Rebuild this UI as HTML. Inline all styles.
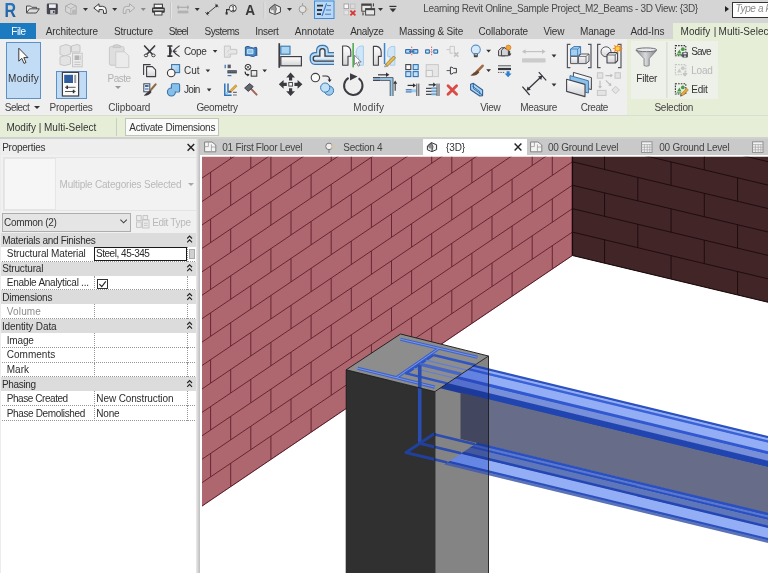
<!DOCTYPE html>
<html><head><meta charset="utf-8"><title>Revit</title>
<style>
*{box-sizing:border-box;margin:0;padding:0}
html,body{width:768px;height:573px;overflow:hidden;background:#fff}
body{position:relative;font-family:"Liberation Sans",sans-serif;font-size:10px;color:#1e1e1e}
.abs,.t{position:absolute;white-space:nowrap}
.t{line-height:14px;height:14px}
#title{position:absolute;left:0;top:0;width:768px;height:39px;background:#d5d5d5}
#ribbon{position:absolute;left:0;top:39px;width:768px;height:77px;background:#efefef}
#opt{position:absolute;left:0;top:115.4px;width:768px;height:21.8px;background:#e6eed8;border-top:1px solid #d9dfd0}
#strip{position:absolute;left:0;top:137px;width:768px;height:20px;background:#c9c9c9}
#props{position:absolute;left:0;top:139px;width:198px;height:434px;background:#fff}
.vp{position:absolute;left:0;top:0;will-change:transform}
#txt{position:absolute;left:0;top:0;width:768px;height:573px;will-change:transform;transform:translateZ(0)}
.sep{position:absolute;top:42px;width:1px;height:70px;background:#dcdcdc}
.pl{color:#3c3c3c}
.gr{color:#9a9a9a}
.row{position:absolute;left:0;width:196px;height:14px}
.hd{background:#dcdcdc}
</style></head><body>

<div id="title"></div>
<!-- tab row -->
<div class="abs" style="left:0;top:23px;width:36px;height:16px;background:#1c7ac0"></div>
<div class="abs" style="left:673px;top:23px;width:95px;height:17px;background:#e6eed8"></div>
<div class="abs" style="left:732px;top:2px;width:40px;height:16px;background:#fff;border:1px solid #333"></div>
<div class="abs" style="left:725px;top:6px;width:0;height:0;border-left:4px solid #222;border-top:3.5px solid transparent;border-bottom:3.5px solid transparent"></div>

<div id="ribbon"></div>
<div class="abs" style="left:626.8px;top:39px;width:141.2px;height:77px;background:#e6eed8"></div>
<div class="abs" style="left:631px;top:41px;width:87px;height:58px;background:#eef0ea"></div>
<!-- Modify btn -->
<div class="abs" style="left:5.6px;top:41.8px;width:35.6px;height:57.6px;background:#c3dcf5;border:1px solid #5a92c8"></div>
<div class="abs" style="left:34px;top:106px;border-top:3.5px solid #333;border-left:3.5px solid transparent;border-right:3.5px solid transparent"></div>
<div class="abs" style="left:56px;top:71.2px;width:31px;height:27.6px;background:#c3dcf5;border:1px solid #5a92c8"></div>
<div class="abs" style="left:115px;top:86px;border-top:3px solid #999;border-left:3px solid transparent;border-right:3px solid transparent"></div>

<div id="opt"></div>
<div class="abs" style="left:116px;top:118px;width:1px;height:18px;background:#c8cfbc"></div>
<div class="abs" style="left:125px;top:118.2px;width:94px;height:18px;background:#fafafa;border:1px solid #c2c6ba"></div>

<div id="strip"></div>
<div class="abs" style="left:0;top:137px;width:768px;height:2.4px;background:#d0d0d0"></div>
<div class="abs" style="left:200.2px;top:155.2px;width:568px;height:2px;background:#fff"></div>
<div class="abs" style="left:423px;top:139px;width:104px;height:17px;background:#fff"></div>

<div id="props"></div>
<div class="abs" style="left:0;top:139.3px;width:198px;height:15.7px;background:#eeeeee"></div>
<div class="abs" style="left:0;top:155px;width:198px;height:57.5px;background:#f1f1f1"></div>
<div class="abs" style="left:2.5px;top:156.5px;width:194px;height:54.5px;border:1px solid #e3e3e3;background:#f2f2f2"></div>
<div class="abs" style="left:3.5px;top:157.5px;width:52px;height:52.5px;background:#f6f6f6;border:1px solid #e6e6e6"></div>
<div class="abs" style="left:187.5px;top:182.5px;border-top:3.5px solid #a8a8a8;border-left:3.5px solid transparent;border-right:3.5px solid transparent"></div>
<div class="abs" style="left:0;top:212.5px;width:198px;height:20.7px;background:#f0f0f0"></div>
<div class="abs" style="left:1.5px;top:213.3px;width:129px;height:18.4px;background:#e5e5e5;border:1px solid #adadad"></div>
<div class="abs" style="left:0;top:232.90px;width:197px;height:14.00px;background:#dcdcdc"></div>
<div class="abs" style="left:0;top:246.90px;width:197px;height:14.75px;background:#fff;border-bottom:1px dotted #969696"></div>
<div class="abs" style="left:93.5px;top:246.90px;width:94px;height:14.75px;border-left:1px dotted #969696;border-right:1px dotted #969696"></div>
<div class="abs" style="left:196px;top:246.90px;width:1px;height:14.75px;border-left:1px dotted #969696"></div>
<div class="abs" style="left:0;top:261.65px;width:197px;height:14.00px;background:#dcdcdc"></div>
<div class="abs" style="left:0;top:275.65px;width:197px;height:14.75px;background:#fff;border-bottom:1px dotted #969696"></div>
<div class="abs" style="left:93.5px;top:275.65px;width:94px;height:14.75px;border-left:1px dotted #969696;border-right:1px dotted #969696"></div>
<div class="abs" style="left:196px;top:275.65px;width:1px;height:14.75px;border-left:1px dotted #969696"></div>
<div class="abs" style="left:0;top:290.40px;width:197px;height:14.00px;background:#dcdcdc"></div>
<div class="abs" style="left:0;top:304.40px;width:197px;height:14.75px;background:#fff;border-bottom:1px dotted #969696"></div>
<div class="abs" style="left:93.5px;top:304.40px;width:94px;height:14.75px;border-left:1px dotted #969696;border-right:1px dotted #969696"></div>
<div class="abs" style="left:196px;top:304.40px;width:1px;height:14.75px;border-left:1px dotted #969696"></div>
<div class="abs" style="left:0;top:319.15px;width:197px;height:14.00px;background:#dcdcdc"></div>
<div class="abs" style="left:0;top:333.15px;width:197px;height:14.75px;background:#fff;border-bottom:1px dotted #969696"></div>
<div class="abs" style="left:93.5px;top:333.15px;width:94px;height:14.75px;border-left:1px dotted #969696;border-right:1px dotted #969696"></div>
<div class="abs" style="left:196px;top:333.15px;width:1px;height:14.75px;border-left:1px dotted #969696"></div>
<div class="abs" style="left:0;top:347.90px;width:197px;height:14.75px;background:#fff;border-bottom:1px dotted #969696"></div>
<div class="abs" style="left:93.5px;top:347.90px;width:94px;height:14.75px;border-left:1px dotted #969696;border-right:1px dotted #969696"></div>
<div class="abs" style="left:196px;top:347.90px;width:1px;height:14.75px;border-left:1px dotted #969696"></div>
<div class="abs" style="left:0;top:362.65px;width:197px;height:14.75px;background:#fff;border-bottom:1px dotted #969696"></div>
<div class="abs" style="left:93.5px;top:362.65px;width:94px;height:14.75px;border-left:1px dotted #969696;border-right:1px dotted #969696"></div>
<div class="abs" style="left:196px;top:362.65px;width:1px;height:14.75px;border-left:1px dotted #969696"></div>
<div class="abs" style="left:0;top:377.40px;width:197px;height:14.00px;background:#dcdcdc"></div>
<div class="abs" style="left:0;top:391.40px;width:197px;height:14.75px;background:#fff;border-bottom:1px dotted #969696"></div>
<div class="abs" style="left:93.5px;top:391.40px;width:94px;height:14.75px;border-left:1px dotted #969696;border-right:1px dotted #969696"></div>
<div class="abs" style="left:196px;top:391.40px;width:1px;height:14.75px;border-left:1px dotted #969696"></div>
<div class="abs" style="left:0;top:406.15px;width:197px;height:14.75px;background:#fff;border-bottom:1px dotted #969696"></div>
<div class="abs" style="left:93.5px;top:406.15px;width:94px;height:14.75px;border-left:1px dotted #969696;border-right:1px dotted #969696"></div>
<div class="abs" style="left:196px;top:406.15px;width:1px;height:14.75px;border-left:1px dotted #969696"></div>
<div class="abs" style="left:94.3px;top:247.40px;width:92.6px;height:13.4px;border:1.3px solid #1a1a1a;background:#fff"></div>
<div class="abs" style="left:188.6px;top:249.10px;width:6.6px;height:10.4px;background:#d0d0d0;border:1px solid #aaa"></div>
<div class="abs" style="left:97px;top:278.85px;width:10.6px;height:10.4px;background:#fff;border:1.1px solid #333"></div>
<div class="abs" style="left:196.4px;top:139px;width:3.8px;height:434px;background:linear-gradient(90deg,#ececec,#cfcfcf 60%,#bdbdbd)"></div>
<div class="abs" style="left:0;top:139px;width:1px;height:434px;background:#ececec"></div>
<svg class="vp" width="768" height="573" viewBox="0 0 768 573">
<defs><clipPath id="cl"><polygon points="202,156.7 572.4,156.7 572.4,255.5 202,506.11"/></clipPath>
<clipPath id="cr"><polygon points="572.4,156.7 768,156.7 768,302.25 572.4,255.5"/></clipPath></defs>
<polygon points="202,156.7 572.4,156.7 572.4,255.5 202,506.11" fill="#ae676f"/>
<polygon points="572.4,156.7 768,156.7 768,302.25 572.4,255.5" fill="#422527"/>
<path clip-path="url(#cl)" d="M202,506.11 L572.4,255.5 M202,482.68 L572.4,232.07 M202,459.25 L572.4,208.64 M202,435.82 L572.4,185.21 M202,412.39 L572.4,161.78 M202,388.96 L572.4,138.35 M202,365.53 L572.4,114.92 M202,342.1 L572.4,91.49 M202,318.67 L572.4,68.06 M202,295.24 L572.4,44.63 M202,271.81 L572.4,21.2 M202,248.38 L572.4,-2.23 M202,224.95 L572.4,-25.66 M202,201.52 L572.4,-49.09 M202,178.09 L572.4,-72.52 M202,154.66 L572.4,-95.95 M552.3,269.1 L552.3,245.67 M552.3,222.24 L552.3,198.81 M552.3,175.38 L552.3,151.95 M552.3,128.52 L552.3,105.09 M552.3,81.66 L552.3,58.23 M552.3,34.8 L552.3,11.37 M552.3,-12.06 L552.3,-35.49 M552.3,-58.92 L552.3,-82.35 M532.2,259.27 L532.2,235.84 M532.2,212.41 L532.2,188.98 M532.2,165.55 L532.2,142.12 M532.2,118.69 L532.2,95.26 M532.2,71.83 L532.2,48.4 M532.2,24.97 L532.2,1.54 M532.2,-21.89 L532.2,-45.32 M532.2,-68.75 L532.2,-92.18 M512.1,296.3 L512.1,272.87 M512.1,249.44 L512.1,226.01 M512.1,202.58 L512.1,179.15 M512.1,155.72 L512.1,132.29 M512.1,108.86 L512.1,85.43 M512.1,62 L512.1,38.57 M512.1,15.14 L512.1,-8.29 M512.1,-31.72 L512.1,-55.15 M492,286.47 L492,263.04 M492,239.61 L492,216.18 M492,192.75 L492,169.32 M492,145.89 L492,122.46 M492,99.03 L492,75.6 M492,52.17 L492,28.74 M492,5.31 L492,-18.12 M492,-41.55 L492,-64.98 M471.9,323.5 L471.9,300.07 M471.9,276.64 L471.9,253.21 M471.9,229.78 L471.9,206.35 M471.9,182.92 L471.9,159.49 M471.9,136.06 L471.9,112.63 M471.9,89.2 L471.9,65.77 M471.9,42.34 L471.9,18.91 M471.9,-4.52 L471.9,-27.95 M451.8,313.67 L451.8,290.24 M451.8,266.81 L451.8,243.38 M451.8,219.95 L451.8,196.52 M451.8,173.09 L451.8,149.66 M451.8,126.23 L451.8,102.8 M451.8,79.37 L451.8,55.94 M451.8,32.51 L451.8,9.08 M451.8,-14.35 L451.8,-37.78 M431.7,350.7 L431.7,327.27 M431.7,303.84 L431.7,280.41 M431.7,256.98 L431.7,233.55 M431.7,210.12 L431.7,186.69 M431.7,163.26 L431.7,139.83 M431.7,116.4 L431.7,92.97 M431.7,69.54 L431.7,46.11 M431.7,22.68 L431.7,-0.75 M411.6,340.87 L411.6,317.44 M411.6,294.01 L411.6,270.58 M411.6,247.15 L411.6,223.72 M411.6,200.29 L411.6,176.86 M411.6,153.43 L411.6,130 M411.6,106.57 L411.6,83.14 M411.6,59.71 L411.6,36.28 M411.6,12.85 L411.6,-10.58 M391.5,377.9 L391.5,354.47 M391.5,331.04 L391.5,307.61 M391.5,284.18 L391.5,260.75 M391.5,237.32 L391.5,213.89 M391.5,190.46 L391.5,167.03 M391.5,143.6 L391.5,120.17 M391.5,96.74 L391.5,73.31 M391.5,49.88 L391.5,26.45 M371.4,368.07 L371.4,344.64 M371.4,321.21 L371.4,297.78 M371.4,274.35 L371.4,250.92 M371.4,227.49 L371.4,204.06 M371.4,180.63 L371.4,157.2 M371.4,133.77 L371.4,110.34 M371.4,86.91 L371.4,63.48 M371.4,40.05 L371.4,16.62 M351.3,405.1 L351.3,381.67 M351.3,358.24 L351.3,334.81 M351.3,311.38 L351.3,287.95 M351.3,264.52 L351.3,241.09 M351.3,217.66 L351.3,194.23 M351.3,170.8 L351.3,147.37 M351.3,123.94 L351.3,100.51 M351.3,77.08 L351.3,53.65 M331.2,395.27 L331.2,371.84 M331.2,348.41 L331.2,324.98 M331.2,301.55 L331.2,278.12 M331.2,254.69 L331.2,231.26 M331.2,207.83 L331.2,184.4 M331.2,160.97 L331.2,137.54 M331.2,114.11 L331.2,90.68 M331.2,67.25 L331.2,43.82 M311.1,432.3 L311.1,408.87 M311.1,385.44 L311.1,362.01 M311.1,338.58 L311.1,315.15 M311.1,291.72 L311.1,268.29 M311.1,244.86 L311.1,221.43 M311.1,198 L311.1,174.57 M311.1,151.14 L311.1,127.71 M311.1,104.28 L311.1,80.85 M291,422.47 L291,399.04 M291,375.61 L291,352.18 M291,328.75 L291,305.32 M291,281.89 L291,258.46 M291,235.03 L291,211.6 M291,188.17 L291,164.74 M291,141.31 L291,117.88 M291,94.45 L291,71.02 M270.9,459.49 L270.9,436.06 M270.9,412.63 L270.9,389.2 M270.9,365.77 L270.9,342.34 M270.9,318.91 L270.9,295.48 M270.9,272.05 L270.9,248.62 M270.9,225.19 L270.9,201.76 M270.9,178.33 L270.9,154.9 M270.9,131.47 L270.9,108.04 M250.8,449.66 L250.8,426.23 M250.8,402.8 L250.8,379.37 M250.8,355.94 L250.8,332.51 M250.8,309.08 L250.8,285.65 M250.8,262.22 L250.8,238.79 M250.8,215.36 L250.8,191.93 M250.8,168.5 L250.8,145.07 M250.8,121.64 L250.8,98.21 M230.7,486.69 L230.7,463.26 M230.7,439.83 L230.7,416.4 M230.7,392.97 L230.7,369.54 M230.7,346.11 L230.7,322.68 M230.7,299.25 L230.7,275.82 M230.7,252.39 L230.7,228.96 M230.7,205.53 L230.7,182.1 M230.7,158.67 L230.7,135.24 M210.6,476.86 L210.6,453.43 M210.6,430 L210.6,406.57 M210.6,383.14 L210.6,359.71 M210.6,336.28 L210.6,312.85 M210.6,289.42 L210.6,265.99 M210.6,242.56 L210.6,219.13 M210.6,195.7 L210.6,172.27 M210.6,148.84 L210.6,125.41 M190.5,513.89 L190.5,490.46 M190.5,467.03 L190.5,443.6 M190.5,420.17 L190.5,396.74 M190.5,373.31 L190.5,349.88 M190.5,326.45 L190.5,303.02 M190.5,279.59 L190.5,256.16 M190.5,232.73 L190.5,209.3 M190.5,185.87 L190.5,162.44" stroke="#5e1f2b" stroke-width="0.9" fill="none"/>
<path clip-path="url(#cr)" d="M572.4,255.5 L768,302.25 M572.4,232.07 L768,278.82 M572.4,208.64 L768,255.39 M572.4,185.21 L768,231.96 M572.4,161.78 L768,208.53 M572.4,138.35 L768,185.1 M572.4,114.92 L768,161.67 M572.4,91.49 L768,138.24 M604.55,263.18 L604.55,239.75 M604.55,216.32 L604.55,192.89 M604.55,169.46 L604.55,146.03 M604.55,122.6 L604.55,99.17 M637.8,247.7 L637.8,224.27 M637.8,200.84 L637.8,177.41 M637.8,153.98 L637.8,130.55 M637.8,107.12 L637.8,83.69 M671.05,279.08 L671.05,255.65 M671.05,232.22 L671.05,208.79 M671.05,185.36 L671.05,161.93 M671.05,138.5 L671.05,115.07 M704.3,263.59 L704.3,240.16 M704.3,216.73 L704.3,193.3 M704.3,169.87 L704.3,146.44 M704.3,123.01 L704.3,99.58 M737.55,294.97 L737.55,271.54 M737.55,248.11 L737.55,224.68 M737.55,201.25 L737.55,177.82 M737.55,154.39 L737.55,130.96 M770.8,279.49 L770.8,256.06 M770.8,232.63 L770.8,209.2 M770.8,185.77 L770.8,162.34 M770.8,138.91 L770.8,115.48" stroke="#1c0a0d" stroke-width="0.9" fill="none"/>
<line x1="572.4" y1="156.7" x2="572.4" y2="255.5" stroke="#1e070a" stroke-width="1.4"/>
<line x1="202" y1="506.11" x2="572.4" y2="255.5" stroke="#5e1f2b" stroke-width="1"/>
<line x1="572.4" y1="255.5" x2="768" y2="302.25" stroke="#1c0a0d" stroke-width="1"/>
<polygon points="346.2,369.8 434.9,391.6 434.9,573 346.2,573" fill="#303030"/>
<polygon points="434.9,391.6 488.5,356 488.5,573 434.9,573" fill="#848484"/>
<polygon points="346.2,369.8 400.5,334 488.5,356 434.9,391.6" fill="#8d8d8d"/>
<polygon points="488.5,368.33 768,435.97 768,438.77 488.5,371.13" fill="#2c52c0"/>
<polygon points="488.5,370.53 768,438.17 768,440.87 488.5,373.23" fill="#94aef5"/>
<polygon points="488.5,372.63 768,440.27 768,443.37 488.5,375.73" fill="#3a62d8"/>
<polygon points="488.5,375.13 768,442.77 768,451.77 488.5,384.13" fill="#94aef5"/>
<polygon points="488.5,383.53 768,451.17 768,454.87 488.5,387.23" fill="#3058d0"/>
<polygon points="488.5,386.63 768,454.27 768,461.27 488.5,393.63" fill="#7890da"/>
<polygon points="488.5,393.03 768,460.67 768,467.57 488.5,399.93" fill="#2145b0"/>
<polygon points="488.5,399.33 768,466.97 768,513.47 488.5,445.83" fill="#676d89"/>
<polygon points="488.5,445.23 768,512.87 768,516.07 488.5,448.43" fill="#2a50c0"/>
<polygon points="488.5,447.83 768,515.47 768,518.17 488.5,450.53" fill="#5a78d0"/>
<polygon points="488.5,449.93 768,517.57 768,520.27 488.5,452.63" fill="#2a50c0"/>
<polygon points="488.5,452.03 768,519.67 768,526.07 488.5,458.43" fill="#5f76b8"/>
<polygon points="488.5,457.83 768,525.47 768,528.67 488.5,461.03" fill="#2446b4"/>
<polygon points="488.5,460.43 768,528.07 768,538.57 488.5,470.93" fill="#94aef5"/>
<polygon points="488.5,470.33 768,537.97 768,540.67 488.5,473.03" fill="#2a50c0"/>
<polygon points="488.5,472.43 768,540.07 768,542.97 488.5,475.33" fill="#5a72b8"/>
<defs><clipPath id="cf1"><polygon points="434.9,391.6 488.5,356 488.5,573 434.9,573"/></clipPath>
<clipPath id="cf2"><polygon points="440,467.41 488.5,435.2 488.5,573 440,573"/></clipPath></defs>
<polygon clip-path="url(#cf1)" points="430,354.18 488.5,368.33 488.5,371.13 430,356.98" fill="#2446b4"/>
<polygon clip-path="url(#cf1)" points="430,356.38 488.5,370.53 488.5,373.23 430,359.08" fill="#6482e0"/>
<polygon clip-path="url(#cf1)" points="430,358.48 488.5,372.63 488.5,375.73 430,361.58" fill="#3054c8"/>
<polygon clip-path="url(#cf1)" points="430,360.98 488.5,375.13 488.5,384.13 430,369.98" fill="#6482e0"/>
<polygon clip-path="url(#cf1)" points="430,369.38 488.5,383.53 488.5,387.23 430,373.08" fill="#2a4cc0"/>
<polygon clip-path="url(#cf1)" points="430,372.48 488.5,386.63 488.5,393.63 430,379.48" fill="#5470cc"/>
<polygon clip-path="url(#cf1)" points="430,378.88 488.5,393.03 488.5,399.93 430,385.78" fill="#1c3a9c"/>
<polygon points="460.5,392.56 488.5,399.33 488.5,445.83 460.5,439.06" fill="#42465e"/>
<polygon clip-path="url(#cf2)" points="440,433.5 488.5,445.23 488.5,448.43 440,436.7" fill="#1d3c9c"/>
<polygon clip-path="url(#cf2)" points="440,436.1 488.5,447.83 488.5,450.53 440,438.8" fill="#3f58b0"/>
<polygon clip-path="url(#cf2)" points="440,438.2 488.5,449.93 488.5,452.63 440,440.9" fill="#2444a8"/>
<polygon clip-path="url(#cf2)" points="440,440.3 488.5,452.03 488.5,458.43 440,446.7" fill="#44589e"/>
<polygon clip-path="url(#cf2)" points="440,446.1 488.5,457.83 488.5,461.03 440,449.3" fill="#1f3ea6"/>
<polygon clip-path="url(#cf2)" points="440,448.7 488.5,460.43 488.5,470.93 440,459.2" fill="#6686e4"/>
<polygon clip-path="url(#cf2)" points="440,458.6 488.5,470.33 488.5,473.03 440,461.3" fill="#2446b4"/>
<polygon clip-path="url(#cf2)" points="440,460.7 488.5,472.43 488.5,475.33 440,463.6" fill="#4a60a8"/>
<path d="M400.4,339.2 L477.5,357.3 M357.7,368.3 L434.8,387.1 M438.95,348.25 L396.25,377.7" stroke="#3d63cc" stroke-width="3.2" fill="none"/>
<path d="M400.4,339.2 L477.5,357.3 M357.7,368.3 L434.8,387.1 M438.95,348.25 L396.25,377.7" stroke="#7f9be6" stroke-width="0.9" fill="none"/>
<path d="M447.29,383.37 L406.1,373.4 L433.4,355 M433.4,355 L474.89,365.04" stroke="#2f54c4" stroke-width="2.5" fill="none" stroke-linejoin="round"/>
<path d="M419.75,364.2 L461.09,374.2" stroke="#4866c6" stroke-width="3.4" fill="none"/>
<path d="M413.74,368.25 L455.02,378.24 M425.76,360.15 L467.16,370.17" stroke="#5f7fd6" stroke-width="1.2" fill="none"/>
<rect x="417.95" y="365.2" width="3.6" height="78.2" fill="#2a4db2"/>
<path d="M434.9,459.57 L406.1,452.6 L433.4,434.2 L435.9,434.81 M419.75,443.4 L434.9,446.96" stroke="#21409e" stroke-width="3" fill="none" stroke-linejoin="round"/>
<path d="M434.9,459.57 L447.29,462.57 M434.9,434.56 L474.89,444.24 M434.9,446.96 L461,453.28" stroke="#2c4cb0" stroke-width="2.6" fill="none"/>
<path d="M346.2,369.8 L400.5,334 L488.5,356 L434.9,391.6 Z M434.9,391.6 L434.9,573 M488.5,356 L488.5,573 M346.2,369.8 L346.2,573" stroke="#1a1a1a" stroke-width="0.9" fill="none"/>
</svg>
<svg class="vp" width="768" height="573" viewBox="0 0 768 573">
<g id="pp">
<!-- close X -->
<path d="M187.6,144 L194.2,150.8 M194.2,144 L187.6,150.8" stroke="#222" stroke-width="1.4"/>
<!-- combo chevron -->
<path d="M120.4,219.6 L123.6,222.8 L126.8,219.6" fill="none" stroke="#444" stroke-width="1.1"/>
<!-- edit type icon (grey) -->
<g stroke="#c2c2c2" stroke-width="0.9" fill="#ececec"><rect x="136.6" y="215.6" width="4.6" height="5"/><rect x="143" y="215.6" width="4.6" height="4"/><rect x="136.6" y="222" width="4.6" height="5.4"/><rect x="142.6" y="220" width="6.4" height="8"/></g>
<path d="M144,223.2 H147.6 M144,225.4 H147.6" stroke="#c2c2c2" stroke-width="0.9"/>
<!-- view tab icons -->
<path d="M204.6,142 H212 L215.8,145 V151.8 H204.6 Z" fill="#f4f4f4" stroke="#777" stroke-width="0.9"/>
<path d="M208.4,142 V146.6 H204.6 M211.4,147 H215.6 M211.4,144.4 V151.6" fill="none" stroke="#999" stroke-width="0.8"/>
<circle cx="329" cy="146.4" r="3.3" fill="#eee" stroke="#777" stroke-width="1"/><path d="M331.4,143.6 L335.4,146.4 L331.4,149.2 Z" fill="#d2c6a8"/><path d="M329,149.8 V153" stroke="#777" stroke-width="1"/>
<!-- 3d tab -->
<path d="M427.4,146 L431.4,142.6 L436.6,144.8 V149.6 L432,151.6 L427.4,149.8 Z" fill="#f4f4f4" stroke="#333" stroke-width="1" stroke-linejoin="round"/>
<path d="M427.6,146 L431.4,142.8 L433,146.6 L432,151.4" fill="#8a8a90" stroke="#333" stroke-width="0.7"/>
<path d="M430.2,150.4 V148.4 H431.2 V150.8" fill="#f4f4f4"/>
<path d="M514.6,143.6 L521.4,150.6 M521.4,143.6 L514.6,150.6" stroke="#222" stroke-width="1.4"/>
<!-- ground level plan icon -->
<path d="M530.6,142 H538 L541.8,145 V151.8 H530.6 Z" fill="#f4f4f4" stroke="#777" stroke-width="0.9"/>
<path d="M534.4,142 V146.6 H530.6 M537.4,147 H541.6 M537.4,144.4 V151.6" fill="none" stroke="#999" stroke-width="0.8"/>
<!-- schedule icons -->
<g fill="#f2f2f2" stroke="#888" stroke-width="0.9"><rect x="641.6" y="141.8" width="10.4" height="10.6"/><rect x="752.6" y="141.8" width="10.4" height="10.6"/></g>
<path d="M641.6,144.6 H652 M644.4,144.6 V152.4 M647.2,144.6 V152.4 M649.8,144.6 V152.4 M641.6,147.2 H652 M641.6,149.8 H652 M752.6,144.6 H763 M755.4,144.6 V152.4 M758.2,144.6 V152.4 M760.8,144.6 V152.4 M752.6,147.2 H763 M752.6,149.8 H763" stroke="#a4a4a4" stroke-width="0.7" fill="none"/>
</g>

<path d="M187.2,238.50 L189.6,236.10 L192,238.50 M187.2,242.30 L189.6,239.90 L192,242.30 M187.2,267.25 L189.6,264.85 L192,267.25 M187.2,271.05 L189.6,268.65 L192,271.05 M187.2,296.00 L189.6,293.60 L192,296.00 M187.2,299.80 L189.6,297.40 L192,299.80 M187.2,324.75 L189.6,322.35 L192,324.75 M187.2,328.55 L189.6,326.15 L192,328.55 M187.2,383.00 L189.6,380.60 L192,383.00 M187.2,386.80 L189.6,384.40 L192,386.80" fill="none" stroke="#222" stroke-width="1.1"/>
<path d="M99.4,284.05 L101.8,286.65 L105.8,281.45" fill="none" stroke="#222" stroke-width="1.1"/>

<g id="qat">
<defs><linearGradient id="gr" x1="0" y1="0" x2="0" y2="1"><stop offset="0" stop-color="#2a7cc6"/><stop offset="1" stop-color="#1a5796"/></linearGradient></defs>
<text transform="translate(4.4,17.2) scale(0.80,1)" font-family="Liberation Sans, sans-serif" font-weight="bold" font-size="20" fill="url(#gr)">R</text>
<!-- open folder -->
<path d="M26.5,12.8 V6 H30.5 L31.8,7.3 H36.5 V9" fill="#ececec" stroke="#4a4a4a" stroke-width="1"/>
<path d="M26.5,13 L29.5,8.8 H39.3 L36.3,13 Z" fill="#dcdcdc" stroke="#4a4a4a" stroke-width="1" stroke-linejoin="round"/>
<!-- save -->
<rect x="46.8" y="3.5" width="11" height="10.8" rx="1.2" fill="#474752"/>
<rect x="49" y="4.3" width="6.8" height="3.6" fill="#f2f2f6"/>
<rect x="50.2" y="10" width="5" height="3.8" fill="#c8c8d0"/>
<rect x="53" y="10.8" width="1.5" height="2.2" fill="#474752"/>
<!-- sync (grey) -->
<path d="M70.8,3.6 L76.2,6 V11.6 L70.8,14.4 L65.6,11.6 V6 Z" fill="#d8d8d8" stroke="#ababab" stroke-width="1"/>
<path d="M65.6,6 L70.8,8.6 L76.2,6 M70.8,8.6 V14.4" fill="none" stroke="#b4b4b4" stroke-width="0.9"/>
<rect x="72" y="9.5" width="5" height="5.2" rx="1" fill="#b9b9b9"/>
<path d="M83,8 h5 l-2.5,3 z" fill="#333"/>
<!-- undo -->
<path d="M93.8,8 L99,3.8 V6.3 H102.5 Q106.3,6.3 106.3,10.2 V13.4 H103.5 V10.6 Q103.5,9.6 102.3,9.6 H99 V12.2 Z" fill="#f6f6f6" stroke="#3a3a3a" stroke-width="1" stroke-linejoin="round"/>
<path d="M112.2,8 h5 l-2.5,3 z" fill="#333"/>
<!-- redo (grey) -->
<path d="M134.8,8 L129.6,3.8 V6.3 H126.8 Q123.2,6.3 123.2,10.2 V13.4 H126 V10.6 Q126,9.6 127.2,9.6 H129.6 V12.2 Z" fill="#dadada" stroke="#aaaaaa" stroke-width="1" stroke-linejoin="round"/>
<path d="M140.8,8 h5 l-2.5,3 z" fill="#8a8a8a"/>
<!-- print -->
<rect x="154.2" y="4.2" width="8.2" height="3.6" fill="#f4f4f4" stroke="#333" stroke-width="1"/>
<rect x="152" y="7.6" width="12.8" height="5.2" rx="1" fill="#3a3a3e"/>
<rect x="153.2" y="9.2" width="10.4" height="1.2" fill="#f4f4f4"/>
<rect x="154.6" y="11.6" width="7.4" height="3.4" fill="#f4f4f4" stroke="#333" stroke-width="0.9"/>
<rect x="170" y="2" width="1" height="17" fill="#c4c4c4"/><rect x="171" y="2" width="1" height="17" fill="#e4e4e4"/>
<!-- measure (grey) -->
<path d="M177,7.3 H189 M178.2,5.4 V9.2 M187.8,5.4 V9.2" stroke="#a4a4a4" stroke-width="1.1" fill="none"/>
<rect x="177.6" y="10.6" width="10.8" height="2.8" fill="#b2b2b2"/>
<path d="M194.7,8 h5 l-2.5,3 z" fill="#333"/>
<!-- aligned dim -->
<path d="M207.2,13.6 L217.2,5.4 M205.4,12.2 L208.2,15.4 M215.4,3.8 L218.4,7.2" stroke="#444" stroke-width="1" fill="none"/>
<path d="M206.4,14.4 L207.6,11.4 L209.4,13.6 Z M218,4.6 L216.8,7.6 L215,5.4 Z" fill="#333"/>
<!-- tag -->
<path d="M226.6,14 V9.6 H229" stroke="#333" stroke-width="1.2" fill="none"/><rect x="225.6" y="12" width="2" height="2.6" fill="#333"/>
<circle cx="232.8" cy="8.4" r="3.5" fill="#fafafa" stroke="#444" stroke-width="1"/>
<text x="231.3" y="10.9" font-family="Liberation Sans, sans-serif" font-size="6.5" font-weight="bold" fill="#333">1</text>
<text transform="translate(245.2,15) scale(0.88,1)" font-family="Liberation Sans, sans-serif" font-size="15.5" font-weight="bold" fill="#3a3a3a">A</text>
<rect x="263.5" y="2" width="1" height="17" fill="#c4c4c4"/><rect x="264.5" y="2" width="1" height="17" fill="#e4e4e4"/>
<!-- 3d house -->
<path d="M269.6,8.6 L274.6,4.4 L280.4,7.2 V12.2 L275,14.4 L269.6,12.4 Z" fill="#f0f0f0" stroke="#3c3c3c" stroke-width="1" stroke-linejoin="round"/>
<path d="M269.8,8.6 L274.6,4.6 L276.4,8.8 L275,14.2" fill="#98989c" stroke="#4a4a4a" stroke-width="0.7"/>
<path d="M272,13 V10.2 H273.6 V13.6" fill="#f0f0f0" stroke="none"/>
<path d="M287,8 h5 l-2.5,3 z" fill="#333"/>
<!-- section -->
<path d="M304.6,5.2 L309.4,9.2 L304.6,13 Z" fill="#d8ccb0"/>
<circle cx="302.6" cy="9.2" r="3.5" fill="#e2e2e2" stroke="#999" stroke-width="1"/>
<path d="M302.6,3.2 V5.6 M302.6,12.8 V15" stroke="#999" stroke-width="1"/>
<!-- thin lines (active) -->
<rect x="314.5" y="1" width="19.5" height="17.5" fill="#b9d8f6" stroke="#3c8ad8" stroke-width="1"/>
<path d="M317,5.6 H323 M317,10 H322 M317,14.2 H321" stroke="#333" stroke-width="1.8"/>
<path d="M327,5.6 H331 M326,10 H331 M325,14.2 H331" stroke="#3a6fb0" stroke-width="0.9"/>
<path d="M326.6,3.4 L322,16" stroke="#3a78c8" stroke-width="1.1"/>
<!-- close hidden -->
<rect x="344" y="4" width="4.6" height="4.6" fill="#f8f8f8" stroke="#999" stroke-width="0.8"/>
<rect x="350.4" y="4" width="4.6" height="4.6" fill="#dcdcdc" stroke="#bbb" stroke-width="0.8"/>
<rect x="344" y="10.2" width="4.6" height="4.6" fill="#e4e4e4" stroke="#c4c4c4" stroke-width="0.8"/>
<path d="M350.4,10.6 L355.4,15.4 M355.4,10.6 L350.4,15.4" stroke="#d8332e" stroke-width="1.7"/>
<!-- switch windows -->
<rect x="361.8" y="4" width="9.4" height="7.2" fill="#e8e8e8" stroke="#444" stroke-width="1"/>
<rect x="361.8" y="4" width="9.4" height="1.8" fill="#444"/>
<rect x="365.6" y="8.6" width="9" height="6.4" fill="#e8e8e8" stroke="#444" stroke-width="1"/>
<rect x="365.6" y="8.6" width="9" height="1.6" fill="#444"/>
<path d="M373.4,3.4 v3 M363,12.4 v3" stroke="#333" stroke-width="1"/>
<path d="M378,8 h5 l-2.5,3 z" fill="#333"/>
<path d="M389.4,6.4 H396.4" stroke="#333" stroke-width="1.2"/><path d="M389.6,8.6 h6.6 l-3.3,3.6 z" fill="#333"/>
</g>

<defs>
<linearGradient id="gw" x1="0" y1="0" x2="0" y2="1"><stop offset="0" stop-color="#ffffff"/><stop offset="1" stop-color="#d4d4d6"/></linearGradient>
<linearGradient id="gb" x1="0" y1="0" x2="1" y2="1"><stop offset="0" stop-color="#cfe6f8"/><stop offset="1" stop-color="#8fc4ea"/></linearGradient>
<linearGradient id="gf" x1="0" y1="0" x2="1" y2="0"><stop offset="0" stop-color="#8a8c90"/><stop offset="0.45" stop-color="#d8dadc"/><stop offset="1" stop-color="#7e8084"/></linearGradient>
</defs>
<g id="r1">
<!-- cursor arrow -->
<path d="M18.8,48.2 V61.2 L21.8,58.4 L24,63.4 L26,62.5 L23.8,57.6 H28 Z" fill="#fdfdfd" stroke="#3a3a3a" stroke-width="1" stroke-linejoin="round"/>
<!-- type properties (grey) -->
<g stroke="#c2c2c2" stroke-width="0.9" fill="#e3e3e3">
<path d="M60,46.5 L66,44.5 L70.5,46 V54 L64.5,56 L60,54.5 Z"/>
<path d="M71.5,46 L77,44.5 L80,45.5 V52 H71.5 Z"/>
<path d="M60,57 L66,55.5 L70.5,57 V64 L64.5,65.6 L60,64.5 Z"/>
<rect x="72.6" y="53.2" width="9.6" height="13.6" fill="#ececec"/>
</g>
<rect x="74.6" y="55.4" width="4.6" height="4.6" fill="#b4b4b4"/><rect x="79.6" y="55.4" width="1.2" height="4.6" fill="#c8c8c8"/>
<path d="M74.4,62.2 H80.6 M74.4,64.6 H80.6" stroke="#bdbdbd" stroke-width="0.9"/>
<!-- properties icon -->
<rect x="62.4" y="72.4" width="16.2" height="23.6" fill="#fbfbfb" stroke="#3e3e44" stroke-width="1.2"/>
<rect x="64.2" y="74.8" width="8.8" height="8.2" fill="#2f5c9c"/>
<rect x="74.2" y="74.8" width="2" height="8.2" fill="#9a9ca4"/>
<path d="M65,87.3 H75.6 M65,91.5 H75.6" stroke="#555" stroke-width="1"/>
<rect x="66.4" y="85.6" width="1.6" height="3.4" fill="#333"/><rect x="72.8" y="89.8" width="1.6" height="3.4" fill="#333"/>
<!-- paste (grey) -->
<rect x="109.4" y="46.6" width="14.6" height="18.6" rx="1.2" fill="#dedede" stroke="#c9c9c9" stroke-width="1"/>
<path d="M113,47.6 V45.6 Q116.6,43.6 120.4,45.6 V47.6 Z" fill="#d0d0d0" stroke="#c2c2c2" stroke-width="0.8"/>
<path d="M115.8,51.8 H124.6 L128.8,55.8 V67.6 H115.8 Z" fill="#ebebeb" stroke="#cdcdcd" stroke-width="1"/>
<!-- cut (scissors) -->
<path d="M144.6,46 L153,55 M154.6,46 L146.2,55" stroke="#3c3c40" stroke-width="1.7" stroke-linecap="round"/>
<ellipse cx="146" cy="55.4" rx="1.7" ry="1.4" fill="#efefef" stroke="#3c3c40" stroke-width="1"/>
<ellipse cx="153.4" cy="55.4" rx="1.7" ry="1.4" fill="#efefef" stroke="#3c3c40" stroke-width="1"/>
<!-- copy -->
<path d="M143.6,75 V64.6 H150.6" fill="none" stroke="#3e3e44" stroke-width="1.1"/>
<path d="M146.6,66.6 H152.4 L155.6,69.8 V76.6 H146.6 Z" fill="url(#gw)" stroke="#3e3e44" stroke-width="1.1" stroke-linejoin="round"/>
<!-- match type -->
<rect x="143.8" y="83.8" width="6" height="8" fill="#eef2f8" stroke="#44464e" stroke-width="1"/>
<rect x="145" y="85" width="3.6" height="2" fill="#3d6cb0"/><rect x="145" y="88.2" width="3.6" height="1.6" fill="#6d93c8"/>
<path d="M155.6,84.4 L149.6,91.4" stroke="#8a6a48" stroke-width="2.2" stroke-linecap="round"/>
<path d="M150.2,90.4 Q147,92 143.8,95.6 Q149,96 151.6,92 Z" fill="#3a3c44"/>
<!-- cope -->
<path d="M167.4,46 H172.4 M167.4,56.2 H172.4 M169.9,46 V56.2" stroke="#36363c" stroke-width="1.7"/>
<path d="M169.9,48 Q171.4,51 169.9,54.2" stroke="#36363c" stroke-width="2.4" fill="none"/>
<path d="M179.6,45.6 L176,48.4 L173.2,51.2 L176,54 L179.6,56.6 M173.2,51.2 H176.6" stroke="#36363c" stroke-width="1.1" fill="none"/>
<!-- cut geometry -->
<rect x="171.6" y="64.6" width="8" height="8" fill="url(#gb)" stroke="#3b74ad" stroke-width="1.1"/>
<circle cx="171.2" cy="73" r="3.8" fill="#fdf4f4" stroke="#3a3a3e" stroke-width="1.1"/>
<!-- join -->
<rect x="171.4" y="83.8" width="8.2" height="8.2" rx="1" fill="#86c0e8" stroke="#3b74ad" stroke-width="1.1"/>
<circle cx="171.4" cy="92" r="4" fill="#86c0e8" stroke="#3b74ad" stroke-width="1.1"/>
<rect x="172" y="84.6" width="6.8" height="6.8" fill="#86c0e8"/>
<!-- dropdown arrows -->
<path d="M212.8,50 h4.6 l-2.3,2.8 z M205.6,69.4 h4.6 l-2.3,2.8 z M206.8,88.6 h4.6 l-2.3,2.8 z M262.4,69.4 h4.6 l-2.3,2.8 z" fill="#333"/>
<!-- wall joins (grey) -->
<path d="M224.4,46 H230.4 V49.4 H236.8 V54 H230.4 V57.2 H224.4 Z" fill="#e6e6e6" stroke="#c6c6c6" stroke-width="1"/>
<path d="M227,52.6 L229.4,49.6 M229.4,53.6 L228,55.6" stroke="#cfcfcf" stroke-width="1"/>
<!-- split face -->
<path d="M245.4,47 Q248,45.6 250.6,47.4 Q253.4,48.8 256.2,47.2 V55 Q253.6,57.6 250.8,56 Q248,54.6 245.4,55.6 Z" fill="#4a8ac8" stroke="#2a5a90" stroke-width="1"/>
<path d="M247.4,49.6 H253 V53.6 H247.4 Z" fill="#8fc4ea" stroke="#dceefa" stroke-width="0.8"/>
<path d="M256.2,47.2 L257,48.6 V56 L256.2,55" fill="#2a5a90" stroke="#2a5a90" stroke-width="0.6"/>
<!-- beam/column joins -->
<path d="M225.2,64.8 V68.2" stroke="#3d78b8" stroke-width="1.3"/><rect x="227.6" y="64.6" width="3.2" height="3.6" fill="#555a66"/>
<rect x="227.4" y="70.2" width="9.4" height="3.2" fill="#42464e"/><path d="M228.6,71.8 H235.6" stroke="#9db8d8" stroke-width="0.8" stroke-dasharray="1 1"/>
<path d="M227.6,75.6 H231.4" stroke="#3d78b8" stroke-width="1.2"/>
<!-- paint-ish -->
<circle cx="248" cy="67.2" r="2.9" fill="#f0f0f0" stroke="#3a3a3e" stroke-width="1"/><path d="M246.2,65.4 L249.8,69 M249.8,65.4 L246.2,69" stroke="#3a3a3e" stroke-width="0.8"/>
<rect x="251.2" y="70.6" width="5.6" height="5.6" fill="url(#gw)" stroke="#3a3a3e" stroke-width="1"/>
<path d="M245.2,71.6 Q245,75 248.2,74.8" stroke="#222" stroke-width="1.2" fill="none"/><path d="M247.4,73.4 L249.6,74.8 L247.4,76.4 Z" fill="#222"/>
<!-- demolish L w/ pencil -->
<path d="M224.8,83.6 V95.2 H231.6 M228,83.6 V92 H231.6" stroke="#2f72b8" stroke-width="1.5" fill="none"/>
<path d="M224.8,92 H228 V95.2" fill="#8fc4ea" stroke="none"/>
<path d="M233,92.4 H236.8 M233,95 H236.8" stroke="#6a6e78" stroke-width="1.1"/>
<path d="M229.8,90.6 L235.6,84.8 L237,86.2 L231.2,92 Z" fill="#e6b23a" stroke="#a8701e" stroke-width="0.6"/><path d="M229.8,90.6 L231.2,92 L229.2,92.6 Z" fill="#444"/>
<!-- hammer -->
<path d="M250.6,88.4 L256.6,94.6" stroke="#a26458" stroke-width="2" stroke-linecap="round"/>
<path d="M244.6,88 L249.6,83.6 L253.2,86.6 L248.4,91.4 Z" fill="#62666e" stroke="#36383e" stroke-width="0.9" stroke-linejoin="round"/>
</g>

<g id="r2">
<!-- align -->
<rect x="278.4" y="43.2" width="1.7" height="24.6" fill="#3c3c42"/>
<rect x="280.8" y="46.2" width="9.2" height="8" fill="#a9d5f2" stroke="#3b78b2" stroke-width="1.1"/>
<rect x="280.8" y="56.6" width="20.6" height="9.2" fill="url(#gw)" stroke="#404046" stroke-width="1.2"/>
<!-- offset -->
<path d="M334,61.2 H315.4 Q311.4,61.2 311.4,58 Q311.4,54.8 315.4,54.8 H318.4 V51 Q318.4,47 322.4,47 Q326.4,47 326.4,51 V54.8 H334" fill="none" stroke="#b9dcf6" stroke-width="5"/>
<path d="M334,64.4 H315 Q310.2,64.4 310.2,58 Q310.2,53 315,52.6 H316.6 V50.6 Q316.6,45.4 322.4,45.4 Q328.2,45.4 328.2,50.6 V52.6 H334" fill="none" stroke="#3b78b2" stroke-width="1.1"/>
<path d="M334,61.2 H315.4 Q313.2,61.2 313.2,58.6 Q313.2,56.2 315.4,56.2 H319.8 V51 Q319.8,48.6 322.4,48.6 Q325,48.6 325,51 V56.2 H334" fill="none" stroke="#3c3c42" stroke-width="1.3"/>
<!-- mirror pick axis -->
<path d="M342.6,46 H346.4 Q350.8,47 350.8,52 V56.2 H348 V65.2 H342.6 Z" fill="url(#gw)" stroke="#404046" stroke-width="1.1" stroke-linejoin="round"/>
<path d="M363.4,46 H360.8 Q356.2,47 356.2,52 V56.2 H358.6 V65.2 H363.4 Z" fill="#cfe6f8" stroke="#a6cdec" stroke-width="1"/>
<rect x="352.4" y="43" width="1.5" height="24.4" fill="#4aa84a"/>
<path d="M354.4,55.2 V64.6 L356.6,62.6 L358.2,66.2 L359.8,65.4 L358.2,62 H361.2 Z" fill="#fdfdfd" stroke="#6a6a6e" stroke-width="0.8" stroke-linejoin="round"/>
<!-- move -->
<g fill="#3a3a40">
<path d="M290.6,72.6 L295,77.4 H292.2 V80.4 H289 V77.4 H286.2 Z"/>
<path d="M290.6,96 L295,91.2 H292.2 V88.2 H289 V91.2 H286.2 Z"/>
<path d="M278.8,84.3 L283.6,79.9 V82.7 H286.8 V85.9 H283.6 V88.7 Z"/>
<path d="M302.4,84.3 L297.6,79.9 V82.7 H294.4 V85.9 H297.6 V88.7 Z"/>
</g>
<rect x="288.8" y="82.5" width="3.6" height="3.6" fill="#fafafa" stroke="#3a3a40" stroke-width="0.9"/>
<!-- copy -->
<circle cx="315.4" cy="77.6" r="4.2" fill="#fbfbfb" stroke="#404046" stroke-width="1.1"/>
<path d="M322.4,76 H326 Q329.6,76 329.6,80" fill="none" stroke="#303036" stroke-width="1.2"/><path d="M327.6,79.4 h4 l-2,2.8 z" fill="#303036"/>
<circle cx="329" cy="90.6" r="4.6" fill="#9ccbee" stroke="#3b78b2" stroke-width="1"/>
<circle cx="325.2" cy="87.6" r="4.6" fill="#bfe0f6" stroke="#3b78b2" stroke-width="1"/>
<!-- rotate -->
<path d="M358.6,78.2 A9.2,9.2 0 1 1 348.6,77.8" fill="none" stroke="#3c3c42" stroke-width="2"/>
<path d="M350,73.2 L357.6,76.6 L350,80.6 Z" fill="#3c3c42"/>
<!-- mirror draw axis -->
<path d="M373.4,46.4 H376.8 Q381.2,47.4 381.2,52.4 V56.4 H378.4 V65.2 H373.4 Z" fill="url(#gw)" stroke="#404046" stroke-width="1.1" stroke-linejoin="round"/>
<path d="M394.8,46.4 H392 Q387.6,47.4 387.6,52.4 V56.4 H390 V65.2 H394.8 Z" fill="#cfe6f8" stroke="#a6cdec" stroke-width="1"/>
<rect x="383.8" y="43" width="1.5" height="21" fill="#3b86d0"/>
<path d="M385.6,64.2 L393.6,56 L395.6,58 L387.4,66.2 Z" fill="#ecc046" stroke="#8a6420" stroke-width="0.7"/>
<path d="M385.6,64.2 L387.4,66.2 L384.6,67 Z" fill="#f4e6c8" stroke="#555" stroke-width="0.5"/>
<!-- trim/extend to corner -->
<path d="M378,74.8 H386.6" stroke="#44464c" stroke-width="1.3"/><path d="M386,72.6 L389.4,74.8 L386,77 Z" fill="#303036"/>
<path d="M373,79 H391.6 V96" fill="none" stroke="#9ccbee" stroke-width="3.4"/>
<path d="M373,77.6 H380.4 M373,80.4 H380.4" stroke="#44464c" stroke-width="1.1"/>
<path d="M380.4,77.6 H393 V96 M380.4,80.4 H390.2 V96" fill="none" stroke="#5a6068" stroke-width="1"/>
<path d="M395.2,90.8 V83.4" stroke="#44464c" stroke-width="1.2"/><path d="M393.2,83.8 L395.2,80.4 L397.2,83.8 Z" fill="#303036"/>
<!-- split element -->
<rect x="405.6" y="49.6" width="5" height="3.6" rx="0.6" fill="#bfe0f6" stroke="#2f74b6" stroke-width="1.2"/>
<rect x="412.8" y="49.6" width="5" height="3.6" rx="0.6" fill="#bfe0f6" stroke="#2f74b6" stroke-width="1.2"/>
<path d="M409,51.4 H414.4" stroke="#2f74b6" stroke-width="1.6"/>
<path d="M411.7,46.6 V56.2" stroke="#e0605a" stroke-width="1" stroke-dasharray="1.4 1"/>
<!-- split with gap -->
<rect x="425.6" y="49.8" width="3.8" height="3.4" rx="0.5" fill="#d6ebfa" stroke="#2f74b6" stroke-width="1.2"/>
<rect x="433.8" y="49.8" width="3.8" height="3.4" rx="0.5" fill="#d6ebfa" stroke="#2f74b6" stroke-width="1.2"/>
<path d="M431.6,46.6 V56.2" stroke="#e0605a" stroke-width="1" stroke-dasharray="1.4 1"/>
<path d="M429.6,51.5 h4" stroke="#e0a8a4" stroke-width="0.8"/>
<!-- unpin (grey) -->
<path d="M446.4,49.6 H450 M450,46.4 H454.4 V51.6 L456,54 M450,46.4 V53.2 H453" fill="none" stroke="#c9c9c9" stroke-width="1"/>
<path d="M454,52.4 L458.4,56.6 M458.4,52.4 L454,56.6" stroke="#c2c2c2" stroke-width="1.6"/>
<!-- array -->
<rect x="405.8" y="64.6" width="5" height="5" fill="#fbfbfb" stroke="#404046" stroke-width="1.1"/>
<rect x="413.2" y="64.6" width="5" height="5" fill="#bfe0f6" stroke="#2f74b6" stroke-width="1.1"/>
<rect x="405.8" y="71.6" width="5" height="5" fill="#bfe0f6" stroke="#2f74b6" stroke-width="1.1"/>
<rect x="413.2" y="71.6" width="5" height="5" fill="#bfe0f6" stroke="#2f74b6" stroke-width="1.1"/>
<!-- scale (grey) -->
<rect x="426.2" y="64.6" width="12.2" height="12" fill="#e6e6e6" stroke="#c9c9c9" stroke-width="1"/>
<rect x="426.2" y="70.4" width="6.2" height="6.2" fill="#efefef" stroke="#c2c2c2" stroke-width="1"/>
<!-- pin -->
<path d="M446.6,70.6 H450.4" stroke="#55575e" stroke-width="1"/>
<path d="M450.4,67.2 H452 L453.4,68.4 H456.4 V72.8 H453.4 L452,74 H450.4 Z" fill="#f0f0f0" stroke="#3c3c42" stroke-width="1" stroke-linejoin="round"/>
<!-- trim/extend single -->
<path d="M407.6,85.4 H413.6" stroke="#303036" stroke-width="1.2"/><path d="M413,83.2 L416,85.4 L413,87.6 Z" fill="#303036"/>
<path d="M405.8,90.8 H416.4" stroke="#9ccbee" stroke-width="3"/><path d="M405.8,89.6 H411.6 M405.8,92 H411.6" stroke="#4a6c98" stroke-width="0.9"/>
<path d="M416.8,83.6 V96 M418.8,83.6 V96" stroke="#4a4c54" stroke-width="1"/>
<!-- trim/extend multiple -->
<path d="M428.6,84.8 H433.8" stroke="#303036" stroke-width="1.2"/><path d="M433.2,82.6 L436.2,84.8 L433.2,87 Z" fill="#303036"/>
<path d="M426,88.4 H436.4 M426,91.4 H436.4 M426,94.4 H436.4" stroke="#4a4c54" stroke-width="1.1"/>
<path d="M431.4,88.4 H436.4 M431.4,91.4 H436.4 M431.4,94.4 H436.4" stroke="#6aa8dc" stroke-width="1.6"/>
<path d="M437,83.6 V96 M439,83.6 V96" stroke="#4a4c54" stroke-width="1"/>
<!-- delete -->
<path d="M448,85.8 L456.6,94.2 M456.6,85.8 L448,94.2" stroke="#dc4a44" stroke-width="2.8" stroke-linecap="round"/>
</g>

<g id="r3">
<!-- lightbulb -->
<circle cx="475.8" cy="49.6" r="4.5" fill="#d6e9f9" stroke="#5d92cc" stroke-width="1.1"/>
<rect x="473.8" y="53.4" width="4" height="3.8" rx="0.8" fill="#44464e"/>
<rect x="474.6" y="54.2" width="2.4" height="1" fill="#c8d4e4"/>
<path d="M486.2,49.8 h4.8 l-2.4,2.8 z M486.2,69.2 h4.8 l-2.4,2.8 z" fill="#333"/>
<!-- override -->
<path d="M498.6,50.4 L501.4,47.8 H505 V55.8 H498.6 Z" fill="#e4e4e6" stroke="#3c3c42" stroke-width="1" stroke-linejoin="round"/>
<path d="M501.4,50.2 L504.2,47.6 L508.4,50.2 V55.8 H501.4 Z" fill="#d0d2d6" stroke="#3c3c42" stroke-width="1" stroke-linejoin="round"/>
<circle cx="508.4" cy="47.6" r="2.5" fill="#f0a83c" stroke="#d87a1e" stroke-width="0.8"/>
<path d="M509.6,50.8 V54.8" stroke="#3c3c42" stroke-width="1.1"/><path d="M508,53.6 h3.4 l-1.7,2.6 z" fill="#3c3c42"/>
<!-- paint brush -->
<path d="M482.6,65.8 L476.6,72" stroke="#a06a44" stroke-width="2.6" stroke-linecap="round"/>
<path d="M477.8,70.4 Q474,71.6 470.4,75.6 Q476.4,76.4 479.4,72.2 Z" fill="#6a4630"/>
<!-- linework -->
<path d="M498,65.8 H511" stroke="#55575e" stroke-width="1"/>
<path d="M498,69 H511" stroke="#33353a" stroke-width="2.2"/>
<path d="M498,72.4 H505" stroke="#55575e" stroke-width="1" stroke-dasharray="1.4 1"/>
<path d="M506.6,71.2 H509.6 V73.6 H511.6 L508.1,77.2 L504.6,73.6 H506.6 Z" fill="#2f7fd0"/>
<!-- cut profile box -->
<path d="M470.6,84.2 L473.4,83.4 L482.6,90 V95.6 L479.8,96 L470.6,89.8 Z" fill="#a9d5f2" stroke="#2f5f98" stroke-width="1.1" stroke-linejoin="round"/>
<path d="M473.4,83.4 V88.6 L482.4,95 M472.4,86.2 L479.8,91.6 V94.4" fill="none" stroke="#2f5f98" stroke-width="0.9"/>
<!-- measure (grey) -->
<path d="M523.6,51.6 H544" stroke="#c2c2c2" stroke-width="1.2"/><path d="M522,51.6 L525.6,49.2 V54 Z M545.6,51.6 L542,49.2 V54 Z" fill="#c2c2c2"/>
<rect x="522" y="58.2" width="23.6" height="4.4" rx="0.8" fill="#cbcbcb"/>
<path d="M551.6,54.6 h4.8 l-2.4,2.8 z M551.6,83.6 h4.8 l-2.4,2.8 z" fill="#333"/>
<!-- aligned dimension -->
<path d="M528.4,88.8 L540.4,77.6" stroke="#36363c" stroke-width="1.3"/>
<path d="M522.4,86.6 L529.6,95 M538.8,72.2 L546.2,80.4" stroke="#36363c" stroke-width="1.2"/>
<path d="M526.4,90.8 L527.6,86.4 L530.8,89.8 Z M542.4,75.6 L541.2,80 L538,76.6 Z" fill="#36363c"/>
<!-- create assembly -->
<path d="M570.4,44.4 H567.4 V67.6 H570.4 M588,44.4 H591 V67.6 H588" fill="none" stroke="#55575e" stroke-width="1.2"/>
<path d="M570.6,49 L574,46.6 H580.6 L580.6,53.6 L577.6,56 H570.6 Z" fill="#a6d0f0" stroke="#3b78b2" stroke-width="1" stroke-linejoin="round"/>
<path d="M570.6,49 H577.6 V56 M577.6,49 L580.6,46.6" fill="none" stroke="#3b78b2" stroke-width="0.8"/>
<path d="M570.6,56.4 H577.8 V63.6 H570.6 Z" fill="url(#gw)" stroke="#55575e" stroke-width="1"/>
<path d="M578.4,56.4 L581.2,54 H589 V61.2 L586,63.6 H578.4 Z" fill="url(#gw)" stroke="#55575e" stroke-width="1" stroke-linejoin="round"/>
<path d="M578.4,56.4 H586 V63.6 M586,56.4 L589,54" fill="none" stroke="#55575e" stroke-width="0.8"/>
<!-- create parts -->
<path d="M600.6,44.4 H597.6 V67.6 H600.6 M618,44.4 H621 V67.6 H618" fill="none" stroke="#55575e" stroke-width="1.2"/>
<circle cx="606" cy="51.8" r="5" fill="url(#gw)" stroke="#55575e" stroke-width="1"/>
<path d="M607,55 L609.4,52.6 H617.6 V60.6 L615.2,63 H607 Z" fill="url(#gw)" stroke="#44464e" stroke-width="1.1" stroke-linejoin="round"/>
<path d="M607,55 H615.2 V63 M615.2,55 L617.6,52.6" fill="none" stroke="#44464e" stroke-width="0.8"/>
<path d="M617.6,43.4 L618.6,46.2 L621.4,44.8 L620.2,47.6 L623,48.4 L620.2,49.4 L621.4,52.2 L618.6,50.8 L617.6,53.6 L616.6,50.8 L613.8,52.2 L615,49.4 L612.2,48.4 L615,47.6 L613.8,44.8 L616.6,46.2 Z" fill="#f08a24"/>
<circle cx="617.6" cy="48.4" r="2" fill="#fbd44a"/>
<!-- create group -->
<path d="M573.4,72.4 L591.4,77.6 V89.6 L573.4,84.6 Z" fill="url(#gw)" stroke="#44464e" stroke-width="1" stroke-linejoin="round"/>
<path d="M570,75.6 L588.4,80.8 V93 L570,88 Z" fill="#8cc2ea" stroke="#3b78b2" stroke-width="1" stroke-linejoin="round"/>
<path d="M566.6,79.2 L585,84.4 V96.6 L566.6,91.4 Z" fill="url(#gw)" stroke="#44464e" stroke-width="1.1" stroke-linejoin="round"/>
<!-- create similar (grey) -->
<g fill="#e4e4e4" stroke="#c6c6c6" stroke-width="1">
<rect x="597.4" y="72.8" width="5.4" height="5.4"/><rect x="615" y="72.8" width="5.4" height="5.4"/>
<rect x="597.4" y="90.4" width="8.6" height="5"/><path d="M615.6,86.2 L619.4,90 L615.6,93.8 L611.8,90 Z"/>
</g>
<path d="M605.4,75.6 H611 M600,80.8 V86.6 M605.8,80.4 L610,84.6" stroke="#bdbdbd" stroke-width="1.2"/>
<path d="M610.4,73.6 L613,75.6 L610.4,77.6 Z M598,86 L600,88.8 L602,86 Z M608.2,85.6 L611.4,86 L611,82.8 Z" fill="#bdbdbd"/>
<!-- filter funnel -->
<path d="M636,50.4 L644,58.6 V65.6 Q646.6,66.8 649.2,65.6 V58.6 L656.6,50.4 Z" fill="url(#gf)" stroke="#76787e" stroke-width="0.8"/>
<ellipse cx="646.3" cy="49.8" rx="10.4" ry="1.9" fill="#e9eaec" stroke="#6e7076" stroke-width="1"/>
<rect x="666.4" y="42" width="1" height="56" fill="#d2d4ce"/>
<!-- save selection -->
<rect x="675.4" y="45.6" width="10.4" height="10.2" fill="none" stroke="#33353a" stroke-width="1.1" stroke-dasharray="1.6 1.1"/>
<path d="M677,53.4 L679.4,49.4 L681.6,53.4 Z" fill="#4a9a4a"/><circle cx="682.8" cy="49.2" r="1.9" fill="#4a9a4a"/><path d="M676.6,54.6 H682" stroke="#4a9a4a" stroke-width="1"/>
<rect x="682.2" y="52" width="5.6" height="5.6" rx="0.8" fill="#3c3e46"/><rect x="683.4" y="52.6" width="3.2" height="1.8" fill="#e8e8ee"/><rect x="683.8" y="55.4" width="2.4" height="1.8" fill="#b8bac4"/>
<!-- load selection (grey) -->
<rect x="675.4" y="64.6" width="10.4" height="10.2" fill="none" stroke="#c4c4c4" stroke-width="1.1" stroke-dasharray="1.6 1.1"/>
<path d="M677,72.4 L679.4,68.4 L681.6,72.4 Z" fill="#c9c9c9"/><circle cx="682.8" cy="68.2" r="1.9" fill="#c9c9c9"/>
<path d="M685,70.6 V74 M683,73.4 L685,76.2 L687,73.4 Z" stroke="#c4c4c4" stroke-width="1" fill="#c4c4c4"/>
<!-- edit selection -->
<rect x="675.4" y="83.8" width="10.4" height="10.2" fill="none" stroke="#33353a" stroke-width="1.1" stroke-dasharray="1.6 1.1"/>
<path d="M677,91.6 L679.4,87.6 L681.6,91.6 Z" fill="#4a9a4a"/><circle cx="682.8" cy="87.4" r="1.9" fill="#4a9a4a"/><path d="M676.6,92.8 H681" stroke="#4a9a4a" stroke-width="1"/>
<path d="M680.6,94.2 L686.6,88.2 L688.4,90 L682.4,96 Z" fill="#e8a83a" stroke="#a8701e" stroke-width="0.6"/><path d="M680.6,94.2 L682.4,96 L680,96.6 Z" fill="#555"/>
</g>

</svg>
<div id="txt">
<div class="t" style="left:11.30px;top:25.13px;color:#ffffff;letter-spacing:-0.408px;">File</div>
<div class="t" style="left:45.80px;top:25.13px;color:#333333;letter-spacing:-0.110px;">Architecture</div>
<div class="t" style="left:114.05px;top:25.13px;color:#333333;letter-spacing:-0.210px;">Structure</div>
<div class="t" style="left:168.80px;top:25.13px;color:#333333;letter-spacing:-0.787px;">Steel</div>
<div class="t" style="left:204.55px;top:25.13px;color:#333333;letter-spacing:-0.574px;">Systems</div>
<div class="t" style="left:255.30px;top:25.13px;color:#333333;letter-spacing:-0.323px;">Insert</div>
<div class="t" style="left:294.80px;top:25.13px;color:#333333;letter-spacing:-0.057px;">Annotate</div>
<div class="t" style="left:350.30px;top:25.13px;color:#333333;letter-spacing:-0.363px;">Analyze</div>
<div class="t" style="left:399.05px;top:25.13px;color:#333333;letter-spacing:-0.196px;">Massing &amp; Site</div>
<div class="t" style="left:478.55px;top:25.13px;color:#333333;letter-spacing:-0.151px;">Collaborate</div>
<div class="t" style="left:543.55px;top:25.13px;color:#333333;letter-spacing:-0.200px;">View</div>
<div class="t" style="left:580.05px;top:25.13px;color:#333333;letter-spacing:-0.198px;">Manage</div>
<div class="t" style="left:630.55px;top:25.13px;color:#333333;letter-spacing:-0.095px;">Add-Ins</div>
<div class="t" style="left:680.55px;top:25.13px;color:#333333;letter-spacing:0.039px;">Modify</div>
<div class="t" style="left:713.75px;top:25.13px;color:#333333;letter-spacing:0.000px;">|</div>
<div class="t" style="left:718.55px;top:25.13px;color:#333333;letter-spacing:0.059px;">Multi-Select</div>
<div class="t" style="left:423.30px;top:1.93px;color:#4a4a4a;letter-spacing:-0.362px;">Learning Revit Online_Sample Project_M2_Beams - 3D View: {3D}</div>
<div class="t" style="left:735.55px;top:2.13px;color:#8c8c8c;letter-spacing:-0.387px;font-style:italic;">Type a k</div>
<div class="t" style="left:8.05px;top:72.33px;color:#333333;letter-spacing:0.269px;">Modify</div>
<div class="t" style="left:4.80px;top:101.28px;color:#444444;letter-spacing:-0.549px;">Select</div>
<div class="t" style="left:49.55px;top:101.28px;color:#444444;letter-spacing:-0.270px;">Properties</div>
<div class="t" style="left:107.55px;top:72.33px;color:#b2b2b2;letter-spacing:-0.520px;">Paste</div>
<div class="t" style="left:108.30px;top:101.28px;color:#444444;letter-spacing:-0.083px;">Clipboard</div>
<div class="t" style="left:183.95px;top:44.93px;color:#333333;letter-spacing:-0.385px;">Cope</div>
<div class="t" style="left:183.95px;top:64.03px;color:#333333;letter-spacing:-0.031px;">Cut</div>
<div class="t" style="left:183.95px;top:83.03px;color:#333333;letter-spacing:-0.620px;">Join</div>
<div class="t" style="left:196.45px;top:101.28px;color:#444444;letter-spacing:-0.344px;">Geometry</div>
<div class="t" style="left:353.30px;top:101.28px;color:#444444;letter-spacing:0.239px;">Modify</div>
<div class="t" style="left:480.15px;top:101.28px;color:#444444;letter-spacing:-0.267px;">View</div>
<div class="t" style="left:520.35px;top:101.28px;color:#444444;letter-spacing:-0.318px;">Measure</div>
<div class="t" style="left:580.80px;top:101.28px;color:#444444;letter-spacing:-0.493px;">Create</div>
<div class="t" style="left:636.25px;top:72.33px;color:#333333;letter-spacing:-0.227px;">Filter</div>
<div class="t" style="left:654.45px;top:101.28px;color:#444444;letter-spacing:-0.268px;">Selection</div>
<div class="t" style="left:691.35px;top:44.93px;color:#333333;letter-spacing:-0.900px;">Save</div>
<div class="t" style="left:691.35px;top:64.03px;color:#b8b8b8;letter-spacing:-0.283px;">Load</div>
<div class="t" style="left:691.35px;top:83.03px;color:#333333;letter-spacing:-0.245px;">Edit</div>
<div class="t" style="left:6.45px;top:121.28px;color:#333333;letter-spacing:-0.002px;">Modify | Multi-Select</div>
<div class="t" style="left:129.35px;top:121.28px;color:#333333;letter-spacing:-0.250px;">Activate Dimensions</div>
<div class="t" style="left:222.35px;top:140.83px;color:#444444;letter-spacing:-0.289px;">01 First Floor Level</div>
<div class="t" style="left:343.25px;top:140.83px;color:#444444;letter-spacing:-0.288px;">Section 4</div>
<div class="t" style="left:446.05px;top:140.83px;color:#333333;letter-spacing:-0.123px;">{3D}</div>
<div class="t" style="left:548.05px;top:140.83px;color:#444444;letter-spacing:-0.254px;">00 Ground Level</div>
<div class="t" style="left:659.25px;top:140.83px;color:#444444;letter-spacing:-0.254px;">00 Ground Level</div>
<div class="t" style="left:2.15px;top:140.83px;color:#333333;letter-spacing:-0.253px;">Properties</div>
<div class="t" style="left:59.55px;top:178.13px;color:#b9b9b9;letter-spacing:-0.200px;">Multiple Categories Selected</div>
<div class="t" style="left:4.05px;top:216.33px;color:#333333;letter-spacing:-0.298px;">Common (2)</div>
<div class="t" style="left:152.15px;top:216.33px;color:#b9b9b9;letter-spacing:-0.327px;">Edit Type</div>
<div class="t" style="left:2.15px;top:233.63px;color:#2c2c2c;letter-spacing:-0.307px;">Materials and Finishes</div>
<div class="t" style="left:6.85px;top:247.43px;color:#2c2c2c;letter-spacing:-0.119px;">Structural Material</div>
<div class="t" style="left:2.15px;top:262.38px;color:#2c2c2c;letter-spacing:-0.166px;">Structural</div>
<div class="t" style="left:6.85px;top:276.18px;color:#2c2c2c;letter-spacing:-0.259px;">Enable Analytical ...</div>
<div class="t" style="left:2.15px;top:291.13px;color:#2c2c2c;letter-spacing:-0.217px;">Dimensions</div>
<div class="t" style="left:6.85px;top:304.93px;color:#8c8c8c;letter-spacing:0.128px;">Volume</div>
<div class="t" style="left:1.95px;top:319.88px;color:#2c2c2c;letter-spacing:-0.121px;">Identity Data</div>
<div class="t" style="left:6.75px;top:333.68px;color:#2c2c2c;letter-spacing:-0.174px;">Image</div>
<div class="t" style="left:6.75px;top:348.43px;color:#2c2c2c;letter-spacing:0.020px;">Comments</div>
<div class="t" style="left:6.75px;top:363.18px;color:#2c2c2c;letter-spacing:0.022px;">Mark</div>
<div class="t" style="left:1.95px;top:378.13px;color:#2c2c2c;letter-spacing:-0.323px;">Phasing</div>
<div class="t" style="left:6.75px;top:391.93px;color:#2c2c2c;letter-spacing:-0.443px;">Phase Created</div>
<div class="t" style="left:6.75px;top:406.68px;color:#2c2c2c;letter-spacing:-0.362px;">Phase Demolished</div>
<div class="t" style="left:95.95px;top:247.43px;color:#2c2c2c;letter-spacing:-0.458px;">Steel, 45-345</div>
<div class="t" style="left:96.35px;top:391.93px;color:#2c2c2c;letter-spacing:-0.121px;">New Construction</div>
<div class="t" style="left:96.35px;top:406.68px;color:#2c2c2c;letter-spacing:-0.202px;">None</div>
</div>
</body></html>
